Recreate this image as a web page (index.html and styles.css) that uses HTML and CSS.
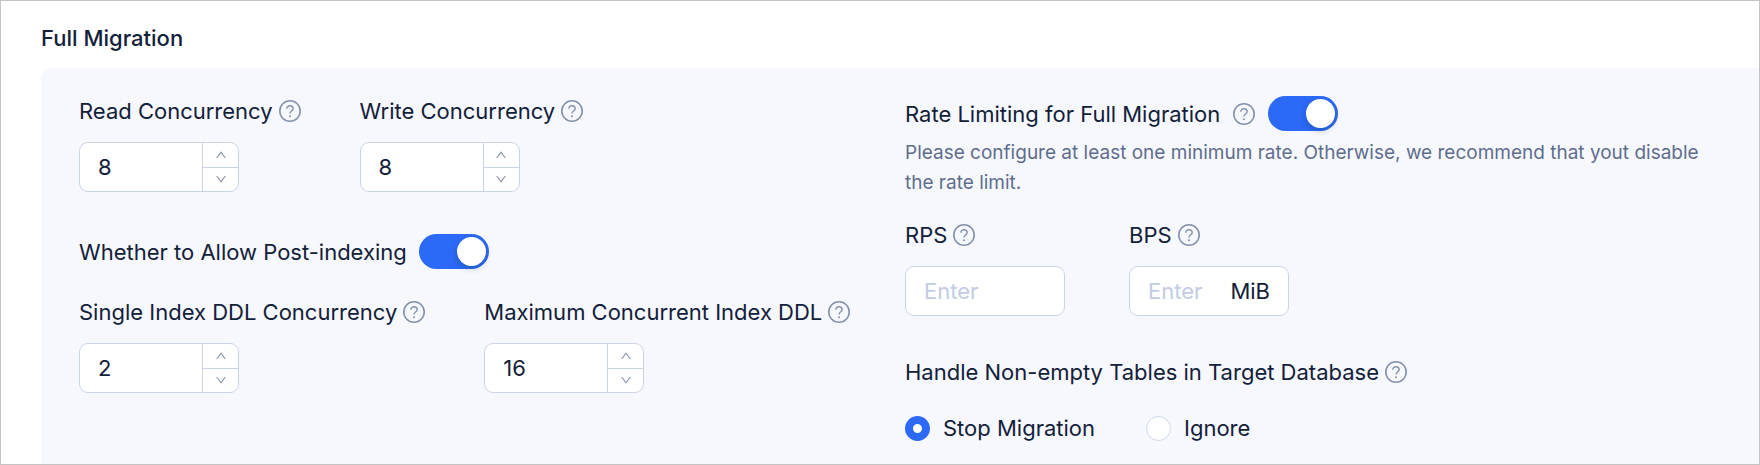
FILE: index.html
```html
<!DOCTYPE html>
<html lang="en">
<head>
    <meta charset="UTF-8">
    <meta name="viewport" content="width=device-width, initial-scale=1.0">
    <title>Full Migration</title>
    <link rel="stylesheet" href="styles.css">
</head>
<body>
    <!-- Shared icons -->
    <svg class="icon-defs" aria-hidden="true">
        <symbol id="icon-help" viewBox="0 0 22 22">
            <circle cx="11" cy="11" r="10.2" stroke-width="1.6"/>
            <path d="M7.8 8.7C7.8 6.9 9.2 5.7 11 5.7C12.8 5.7 14.2 6.9 14.2 8.5C14.2 9.8 13.4 10.4 12.5 11C11.5 11.7 11 12.2 11 13.5" stroke-width="1.4"/>
            <circle class="dot" cx="11" cy="16.3" r="1"/>
        </symbol>
        <symbol id="icon-up" viewBox="0 0 10 8">
            <path d="M0.7 7L5 1.2L9.3 7" stroke-width="1.1"/>
        </symbol>
        <symbol id="icon-down" viewBox="0 0 10 8">
            <path d="M0.7 1L5 6.8L9.3 1" stroke-width="1.1"/>
        </symbol>
    </svg>

    <main class="page">
        <h2>Full Migration</h2>
        <form class="panel">
            <div class="column">
                <div class="field-row">
                    <div class="field">
                        <div class="label-row">
                            <label for="read">Read Concurrency</label>
                            <button type="button" class="help" aria-label="Help"><svg><use href="#icon-help"/></svg></button>
                        </div>
                        <div class="input-box">
                            <input type="number" id="read" value="8">
                            <div class="stepper">
                                <button type="button" aria-label="Increase"><svg><use href="#icon-up"/></svg></button>
                                <button type="button" aria-label="Decrease"><svg><use href="#icon-down"/></svg></button>
                            </div>
                        </div>
                    </div>
                    <div class="field">
                        <div class="label-row">
                            <label for="write">Write Concurrency</label>
                            <button type="button" class="help" aria-label="Help"><svg><use href="#icon-help"/></svg></button>
                        </div>
                        <div class="input-box">
                            <input type="number" id="write" value="8">
                            <div class="stepper">
                                <button type="button" aria-label="Increase"><svg><use href="#icon-up"/></svg></button>
                                <button type="button" aria-label="Decrease"><svg><use href="#icon-down"/></svg></button>
                            </div>
                        </div>
                    </div>
                </div>

                <div class="switch-row post-indexing">
                    <label for="post-indexing">Whether to Allow Post-indexing</label>
                    <input type="checkbox" class="switch" id="post-indexing" checked>
                </div>

                <div class="field-row">
                    <div class="field">
                        <div class="label-row">
                            <label for="single-ddl">Single Index DDL Concurrency</label>
                            <button type="button" class="help" aria-label="Help"><svg><use href="#icon-help"/></svg></button>
                        </div>
                        <div class="input-box">
                            <input type="number" id="single-ddl" value="2">
                            <div class="stepper">
                                <button type="button" aria-label="Increase"><svg><use href="#icon-up"/></svg></button>
                                <button type="button" aria-label="Decrease"><svg><use href="#icon-down"/></svg></button>
                            </div>
                        </div>
                    </div>
                    <div class="field">
                        <div class="label-row">
                            <label for="max-ddl">Maximum Concurrent Index DDL</label>
                            <button type="button" class="help" aria-label="Help"><svg><use href="#icon-help"/></svg></button>
                        </div>
                        <div class="input-box">
                            <input type="number" id="max-ddl" value="16">
                            <div class="stepper">
                                <button type="button" aria-label="Increase"><svg><use href="#icon-up"/></svg></button>
                                <button type="button" aria-label="Decrease"><svg><use href="#icon-down"/></svg></button>
                            </div>
                        </div>
                    </div>
                </div>
            </div>

            <div class="column">
                <div class="switch-row">
                    <label for="rate-limit">Rate Limiting for Full Migration</label>
                    <button type="button" class="help" aria-label="Help"><svg><use href="#icon-help"/></svg></button>
                    <input type="checkbox" class="switch" id="rate-limit" checked>
                </div>
                <p class="hint">Please configure at least one minimum rate. Otherwise, we recommend that yout disable the rate limit.</p>

                <div class="field-row limits">
                    <div class="field">
                        <div class="label-row">
                            <label for="rps">RPS</label>
                            <button type="button" class="help" aria-label="Help"><svg><use href="#icon-help"/></svg></button>
                        </div>
                        <div class="input-box">
                            <input type="text" id="rps" placeholder="Enter">
                        </div>
                    </div>
                    <div class="field">
                        <div class="label-row">
                            <label for="bps">BPS</label>
                            <button type="button" class="help" aria-label="Help"><svg><use href="#icon-help"/></svg></button>
                        </div>
                        <div class="input-box">
                            <input type="text" id="bps" placeholder="Enter">
                            <span class="unit">MiB</span>
                        </div>
                    </div>
                </div>

                <div class="label-row handle" id="handle-label">
                    <span>Handle Non-empty Tables in Target Database</span>
                    <button type="button" class="help" aria-label="Help"><svg><use href="#icon-help"/></svg></button>
                </div>
                <div class="radio-row" role="radiogroup" aria-labelledby="handle-label">
                    <label><input type="radio" name="handle" value="stop" checked>Stop Migration</label>
                    <label><input type="radio" name="handle" value="ignore">Ignore</label>
                </div>
            </div>
        </form>
    </main>
</body>
</html>
```
FILE: styles.css
```css
* {
    box-sizing: border-box;
}

body {
    margin: 0;
    font-family: Inter, "Liberation Sans", sans-serif;
    font-size: 22px;
    line-height: 32px;
    color: #132039;
    background-color: #ffffff;
}

.icon-defs {
    position: absolute;
    width: 0;
    height: 0;
}

svg {
    display: block;
    fill: none;
    stroke: #8592ad;
}

.dot {
    fill: #8592ad;
    stroke: none;
}

.page {
    display: flex;
    flex-direction: column;
    min-height: 100vh;
    padding: 21px 0 0 40px;
    border: 1px solid #c4c4c4;
}

h2 {
    margin: 0 0 14px;
    font-size: 22px;
    font-weight: 500;
}

.panel {
    flex: 1;
    display: grid;
    grid-template-columns: 1fr 1fr;
    padding: 28px 28px 16px 38px;
    background-color: #f6f8fe;
    border-radius: 12px 0 0 0;
}

.field-row {
    display: flex;
    gap: 59px;
}

.label-row,
.switch-row {
    display: flex;
    align-items: center;
    white-space: nowrap;
}

.label-row {
    gap: 6px;
    margin-bottom: 16px;
    line-height: 30px;
}

.switch-row {
    gap: 13px;
    height: 35px;
}

.post-indexing {
    gap: 12px;
    margin: 42px 0 28px;
}

button {
    padding: 0;
    border: none;
    background: none;
    cursor: pointer;
}

.help svg {
    width: 22px;
    height: 22px;
}

.input-box {
    display: flex;
    width: 160px;
    height: 50px;
    overflow: hidden;
    background-color: #ffffff;
    border: 1px solid #cbd4e6;
    border-radius: 9px;
}

.input-box input {
    flex: 1;
    min-width: 0;
    padding: 0 0 0 18px;
    border: none;
    outline: none;
    background: none;
    font: inherit;
    color: inherit;
    appearance: textfield;
}

.input-box input::-webkit-inner-spin-button {
    appearance: none;
}

.input-box input::placeholder {
    color: #c2cce2;
    opacity: 1;
}

.unit {
    padding-right: 18px;
    line-height: 48px;
}

.stepper {
    display: flex;
    flex-direction: column;
    width: 36px;
    border-left: 1px solid #cbd4e6;
}

.stepper button {
    flex: 1;
    display: flex;
    align-items: center;
    justify-content: center;
}

.stepper button + button {
    border-top: 1px solid #cbd4e6;
}

.stepper svg {
    width: 10px;
    height: 8px;
}

.switch {
    appearance: none;
    width: 70px;
    height: 35px;
    margin: 0;
    padding: 3px;
    display: flex;
    background-color: #c2cce2;
    border-radius: 18px;
    cursor: pointer;
}

.switch::before {
    content: "";
    width: 29px;
    height: 29px;
    background-color: #ffffff;
    border-radius: 50%;
    box-shadow: 0 3px 6px rgba(0, 35, 11, 0.2);
}

.switch:checked {
    justify-content: flex-end;
    background-color: #2b69f6;
}

.hint {
    margin: 7px 0 22px;
    font-size: 19px;
    line-height: 30px;
    color: #5f6d8d;
}

.limits {
    gap: 64px;
}

.handle {
    margin: 41px 0 25px;
}

.radio-row {
    display: flex;
    gap: 51px;
}

.radio-row label {
    display: flex;
    align-items: center;
    gap: 13px;
}

.radio-row input {
    appearance: none;
    width: 25px;
    height: 25px;
    margin: 0;
    background-color: #ffffff;
    border: 1px solid #d0d8ea;
    border-radius: 50%;
}

.radio-row input:checked {
    border: 8px solid #2b69f6;
}
```
